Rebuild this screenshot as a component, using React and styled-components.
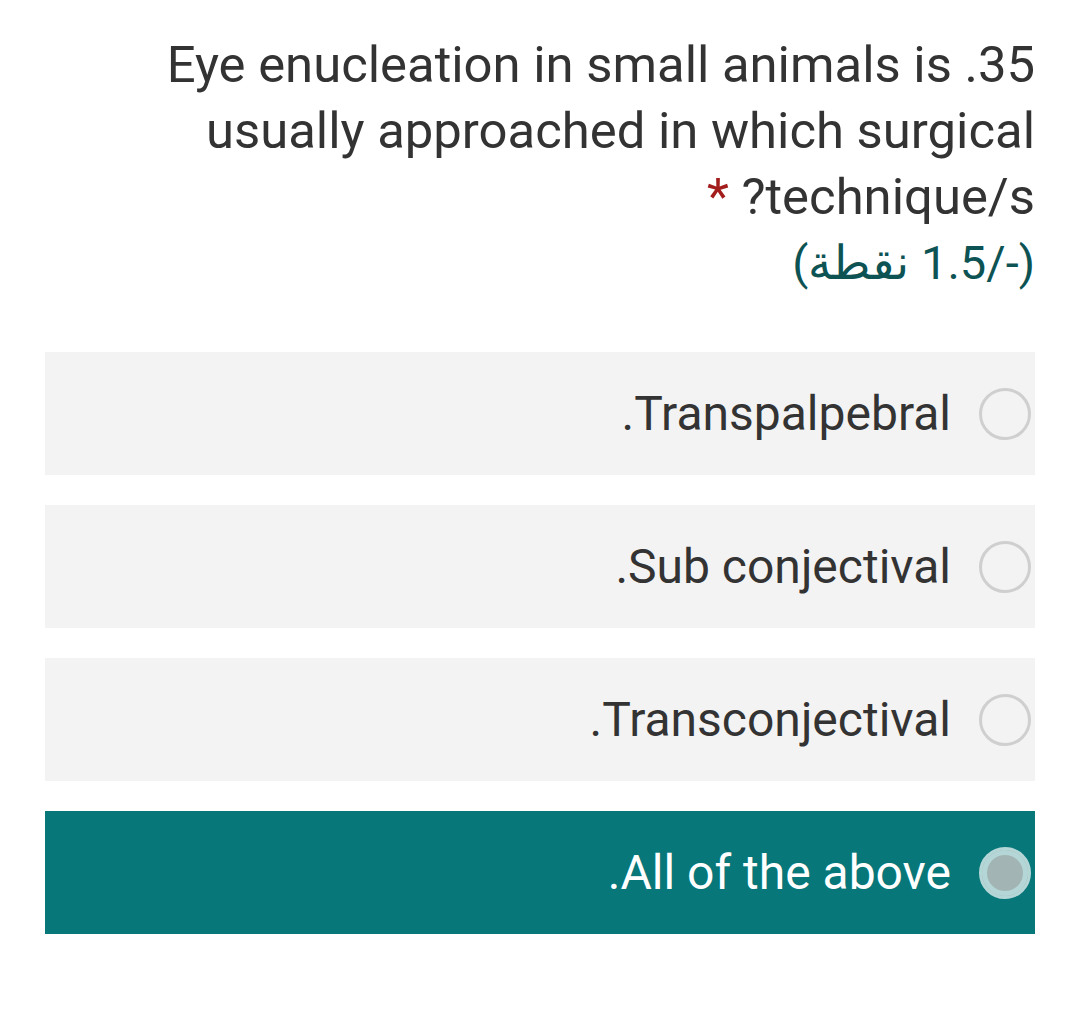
import React, { useState } from 'react';
import styled, { createGlobalStyle } from 'styled-components';

const GlobalStyle = createGlobalStyle`
  body {
    margin: 0;
    background: #ffffff;
    font-family: Roboto, "Noto Sans", "Liberation Sans", sans-serif;
  }
`;

const Page = styled.div`
  padding: 32px 45px 40px 45px;
  direction: rtl;
`;

const Question = styled.div`
  font-size: 50.8px;
  line-height: 66px;
  color: #333333;
  padding-left: 110px;
  text-align: right;
`;

const Star = styled.span`
  color: #a31d1d;
`;

const Points = styled.div`
  font-size: 47px;
  line-height: 66px;
  color: #0d5354;
  margin-bottom: 56px;
`;

const Options = styled.div`
  display: flex;
  flex-direction: column;
  gap: 30px;
`;

const Option = styled.label`
  display: flex;
  align-items: center;
  gap: 28px;
  height: 123px;
  padding: 0 4px 0 20px;
  box-sizing: border-box;
  background: ${(p) => (p.$selected ? '#07777a' : '#f3f3f3')};
  color: ${(p) => (p.$selected ? '#ffffff' : '#333333')};
  font-size: 48px;
  cursor: pointer;
`;

const Radio = styled.span`
  width: 52px;
  height: 52px;
  flex: none;
  border-radius: 50%;
  box-sizing: border-box;
  border: 3px solid ${(p) => (p.$selected ? '#b5d6d6' : '#cfcfcf')};
  background: ${(p) => (p.$selected ? '#a2b5b4' : 'transparent')};
  box-shadow: ${(p) => (p.$selected ? 'inset 0 0 0 5px #b5d6d6' : 'none')};
`;

const choices = [
  'Transpalpebral.',
  'Sub conjectival.',
  'Transconjectival.',
  'All of the above.',
];

export default function App() {
  const [picked, setPicked] = useState(3);
  return (
    <Page>
      <GlobalStyle />
      <Question>
        35. Eye enucleation in small animals is usually approached in which surgical technique/s? <Star>*</Star>
      </Question>
      <Points>(-/1.5 نقطة)</Points>
      <Options>
        {choices.map((c, i) => (
          <Option key={c} $selected={picked === i} onClick={() => setPicked(i)}>
            <Radio $selected={picked === i} />
            <span>{c}</span>
          </Option>
        ))}
      </Options>
    </Page>
  );
}
